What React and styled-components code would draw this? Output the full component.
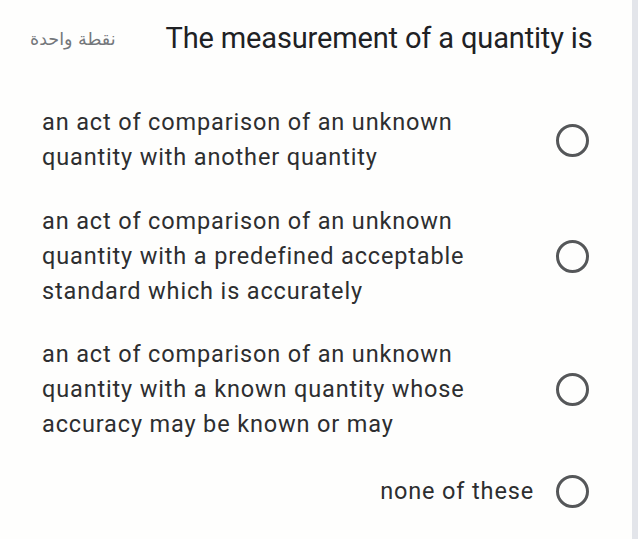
import styled, { createGlobalStyle } from "styled-components";

const GlobalStyle = createGlobalStyle`
  html, body {
    margin: 0;
    padding: 0;
    background: #fefefd;
  }
  body {
    font-family: Roboto, "Liberation Sans", sans-serif;
    color: #202124;
  }
`;

const options = [
  {
    id: "a",
    lines: ["an act of comparison of an unknown", "quantity with another quantity"],
  },
  {
    id: "b",
    lines: [
      "an act of comparison of an unknown",
      "quantity with a predefined acceptable",
      "standard which is accurately",
    ],
  },
  {
    id: "c",
    lines: [
      "an act of comparison of an unknown",
      "quantity with a known quantity whose",
      "accuracy may be known or may",
    ],
  },
];

const App = () => {
  return (
    <>
      <GlobalStyle />
      <Page>
        <Header>
          <Points dir="rtl">نقطة واحدة</Points>
          <Title>The measurement of a quantity is</Title>
        </Header>
        <OptionList>
          {options.map((option) => (
            <OptionRow key={option.id}>
              <OptionText>
                {option.lines.map((line) => (
                  <span key={line}>{line}</span>
                ))}
              </OptionText>
              <Radio />
            </OptionRow>
          ))}
          <OptionRow $end>
            <OptionText>none of these</OptionText>
            <Radio />
          </OptionRow>
        </OptionList>
      </Page>
    </>
  );
};

const Page = styled.div`
  width: 638px;
  height: 539px;
  box-sizing: border-box;
  border-right: 6px solid #e3e5ea;
  overflow: hidden;
`;

const Header = styled.div`
  height: 76px;
  display: flex;
  align-items: center;
  padding-left: 30px;
  gap: 50px;
`;

const Points = styled.div`
  font-family: "DejaVu Sans", "Noto Sans", sans-serif;
  font-size: 17.5px;
  color: #74777b;
  margin-top: 1px;
`;

const Title = styled.div`
  font-size: 29px;
  color: #202124;
  letter-spacing: -0.15px;
`;

const OptionList = styled.div`
  margin-top: 29px;
  padding: 0 43px 0 42px;
  display: flex;
  flex-direction: column;
  gap: 28.5px;
`;

const OptionRow = styled.div`
  display: flex;
  align-items: center;
  justify-content: ${(p) => (p.$end ? "flex-end" : "space-between")};
  gap: 22px;
  margin-top: ${(p) => (p.$end ? "3px" : "0")};
`;

const OptionText = styled.div`
  display: flex;
  flex-direction: column;
  font-size: 23.5px;
  letter-spacing: 0.85px;
  line-height: 35px;
  color: #2d2e30;
`;

const Radio = styled.div`
  width: 33px;
  height: 33px;
  box-sizing: border-box;
  border: 3.5px solid #555759;
  border-radius: 50%;
  flex-shrink: 0;
`;

export default App;
